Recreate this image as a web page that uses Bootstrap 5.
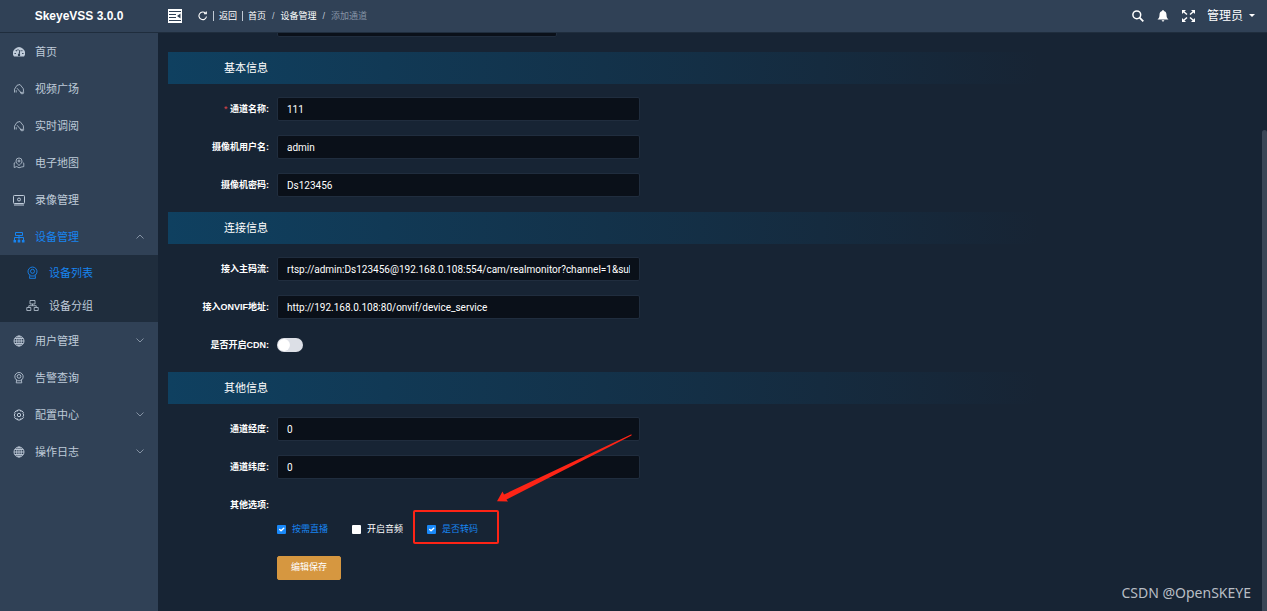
<!DOCTYPE html>
<html lang="zh-CN">
<head>
<meta charset="utf-8">
<meta name="viewport" content="width=device-width, initial-scale=1">
<title>SkeyeVSS 3.0.0</title>
<link href="https://cdn.jsdelivr.net/npm/bootstrap@5.3.0/dist/css/bootstrap.min.css" rel="stylesheet">
<style>
body{background:#172434;color:#fff;font:11px/16px "Liberation Sans","Noto Sans CJK SC",sans-serif;overflow:hidden}
svg{display:block;fill:none;stroke:currentColor;flex:none}
a{color:inherit;text-decoration:none}
.topbar{background:#304156;height:33px;border-bottom:1px solid #1f2d3d}
.brand{width:158px;font-size:12px;font-weight:700}
.crumbs{font-size:9px;margin-left:10px}
.crumbs .breadcrumb{font-size:9px;--bs-breadcrumb-item-padding-x:6px;--bs-breadcrumb-divider-color:#c0c9d4;--bs-breadcrumb-item-active-color:#8794a6}
.split{width:1px;height:10px;background:#c0c9d4;margin:0 5px}
.tool-btn{background:none;border:0;padding:0;color:#fff}
.tools{gap:13px;margin-right:12px}
.user-btn{font-size:12px;margin-left:-1px}
.user-btn::after{margin-left:6px;border-width:3px}
.side{width:158px;background:#304156;color:#bfcbd9}
.side .nav-link{height:37px;padding:0 14px 0 13px;gap:10px;color:inherit;font-size:11px}
.side .sub{background:#1f2d3d;padding-top:1px}
.side .sub .nav-link{height:33px;padding-left:26px}
.side .nav-link.active{color:#1784f0}
.side .chev{margin-left:auto;color:#8492a3}
.content{padding:0 10px}
.peek{margin:-20px 0 15px 109px;width:280px}
.bar{height:32px;margin:15px 0 13px;padding-left:56px;background:linear-gradient(90deg,#0f4060,#172434 80%)}
.bar h2{font-size:11px;line-height:32px;font-weight:400;margin:0}
.line{height:24px;margin-bottom:14px;gap:8px}
.line .cap{width:101px;text-align:right;font-size:9px;font-weight:700}
.req{color:#e0474c;font-weight:400}
.form-control.field,.peek{height:24px;background:#0a1019;border:1px solid #202d3e;border-radius:2px;color:#fff}
.form-control.field{width:363px;padding:0 9px;font:10px/22px Roboto,"Noto Sans CJK SC",sans-serif}
.form-switch .form-check-input.toggle{width:26px;height:14px;margin:0;border:0;background-color:#dcdfe6;--bs-form-switch-bg:url("data:image/svg+xml,%3csvg xmlns='http://www.w3.org/2000/svg' viewBox='-4 -4 8 8'%3e%3ccircle r='3.4' fill='%23fff'/%3e%3c/svg%3e")}
.opts{margin:0 0 15px 109px;gap:24px;font-size:9px;height:24px}
.opt{gap:6px}
.opt .form-check-input{width:9px;height:9px;margin:0;border:0;border-radius:1px;background-color:#fff}
.opt .form-check-input:checked{background-color:#1989fa}
.opt .form-check-input:checked + label{color:#1784f0}
.save{margin-left:109px;width:64px;height:24px;padding:0;font-size:9px;--bs-btn-border-radius:2px;--bs-btn-bg:#d69740;--bs-btn-border-color:#d69740;--bs-btn-color:#fff}
.frame{position:absolute;left:-14px;top:-11px;width:86px;height:34px;border:2px solid #fd2416;border-radius:2px}
.pointer{position:absolute;left:69px;top:-88px;fill:#fd2416;stroke:none}
.thumb{position:absolute;right:0;top:97px;bottom:0;width:5px;border-radius:3px 3px 0 0;background:#3a4656}
.mark-text{position:absolute;right:16px;bottom:8px;font:14px/20px "Noto Sans",sans-serif;color:#b9bec4}
</style>
</head>
<body>
<div class="d-flex flex-column vh-100">
<header class="topbar d-flex align-items-center flex-shrink-0">
  <a href="#" class="brand text-center">SkeyeVSS 3.0.0</a>
  <div class="crumbs d-flex align-items-center">
    <button class="tool-btn me-3" type="button" aria-label="收起菜单"><svg width="14" height="14" viewBox="0 0 14 14"><path d="M0 0h14v14H0z" fill="#fff" stroke="none"/><path d="M1 2.500h12M1 5.500h7M1 8.500h7M1 11.500h12" stroke="#304156" stroke-width="1"/><path d="M12.500 4.500v5L9 7z" fill="#304156" stroke="none"/></svg></button>
    <button class="tool-btn" type="button" aria-label="刷新"><svg width="10" height="10" viewBox="0 0 10 10"><path d="M7.500 2.200A3.800 3.800 0 1 0 8.500 5.500M8.300.5v2.300H6" stroke-width="1.100"/></svg></button>
    <span class="split"></span><a href="#">返回</a><span class="split"></span>
    <ol class="breadcrumb mb-0"><li class="breadcrumb-item"><a href="#">首页</a></li><li class="breadcrumb-item"><a href="#">设备管理</a></li><li class="breadcrumb-item active">添加通道</li></ol>
  </div>
  <div class="tools d-flex align-items-center ms-auto">
    <button class="tool-btn" type="button" aria-label="搜索"><svg width="12" height="12" viewBox="0 0 12 12" stroke-width="1.500"><circle cx="4.800" cy="4.800" r="3.900"/><path d="M7.600 7.600l3.700 3.700" stroke-width="1.800"/></svg></button>
    <button class="tool-btn" type="button" aria-label="消息"><svg width="12" height="12" viewBox="0 0 12 12"><path d="M6 0c.6 0 .8.400.8 1C8.700 1.400 9.500 2.800 9.500 4.800c0 2.500.5 3.500 2 4.700H.5C2 8.300 2.500 7.300 2.500 4.800c0-2 .8-3.400 2.700-3.800 0-.6.2-1 .8-1zM4.700 10.300h2.600a1.300 1.300 0 0 1-2.600 0z" fill="currentColor" stroke="none"/></svg></button>
    <button class="tool-btn" type="button" aria-label="全屏"><svg width="13" height="12" viewBox="0 0 13 12" stroke-width="1.500"><path d="M1.500 1.500l3.500 3M11.500 1.500L8 4.500M1.500 10.500l3.500-3M11.500 10.500L8 7.500"/><path d="M0 0h4L0 4zM13 0H9l4 4zM0 12h4L0 8zM13 12H9l4-4z" stroke="none" fill="currentColor"/></svg></button>
    <button class="tool-btn user-btn dropdown-toggle" type="button" data-bs-toggle="dropdown">管理员</button>
  </div>
</header>
<div class="d-flex flex-grow-1 position-relative overflow-hidden">
  <nav class="side nav flex-column flex-nowrap flex-shrink-0">
    <a href="#" class="nav-link d-flex align-items-center"><svg width="12" height="12" viewBox="0 0 12 12"><path d="M1 10.500A6 6 0 1 1 11 10.500z" fill="currentColor" stroke="none"/><path d="M6 9l.9-5M1.500 7.500h1.400M9.100 7.500h1.400M2.800 4.200l1 .9M5 3.200V4.500M9.300 4.300l-.8.9" stroke="#304156" stroke-width="1.100"/><circle cx="6" cy="9" r="1.200" fill="#304156" stroke="none"/></svg>首页</a>
    <a href="#" class="nav-link d-flex align-items-center"><svg width="12" height="12" viewBox="0 0 12 12" stroke-width=".8"><path d="M1.500 9.500V6.200L4 2.300l3-.8 3.300 4.200.3 3-1.600.9-1.700-.6L4 5.200M3.200 9.500V7.200M7.300 9l.8 1.700h2.100l.6-1.600"/></svg>视频广场</a>
    <a href="#" class="nav-link d-flex align-items-center"><svg width="12" height="12" viewBox="0 0 12 12" stroke-width=".8"><path d="M1.500 9.500V6.200L4 2.300l3-.8 3.300 4.200.3 3-1.600.9-1.700-.6L4 5.200M3.200 9.500V7.200M7.300 9l.8 1.700h2.100l.6-1.600"/></svg>实时调阅</a>
    <a href="#" class="nav-link d-flex align-items-center"><svg width="12" height="12" viewBox="0 0 12 12" stroke-width=".8"><path d="M6 8.500C4 6.800 3 5.500 3 4a3 3 0 0 1 6 0c0 1.500-1 2.800-3 4.500z"/><circle cx="6" cy="4" r="1"/><path d="M2.300 5.500L1.200 6v4.500l2.500-.9 2.300 1.200 2.500-.8 2.300-.4V6.300L9.800 5.500"/></svg>电子地图</a>
    <a href="#" class="nav-link d-flex align-items-center"><svg width="12" height="12" viewBox="0 0 12 12"><rect x=".5" y="1.500" width="11" height="8" rx=".8"/><circle cx="6" cy="5.500" r="1.500"/><path d="M1 11h10"/></svg>录像管理</a>
    <a href="#" class="nav-link active d-flex align-items-center"><svg width="12" height="12" viewBox="0 0 12 12"><path d="M2.500 1.500h7v3h-7zM6 5v2M1.500 9V6.500h9V9M6 7v3"/><path d="M.5 9h2.600v2.500H.5zM4.700 9h2.600v2.500H4.700zM8.900 9h2.600v2.500H8.900z" fill="currentColor" stroke="none"/></svg>设备管理<svg class="chev" width="8" height="5" viewBox="0 0 8 5"><path d="M.5 4.500L4 1l3.500 3.500"/></svg></a>
    <div class="sub">
      <a href="#" class="nav-link active d-flex align-items-center"><svg width="13" height="13" viewBox="0 0 13 13" stroke-width=".9"><path d="M4 9.300a4.500 4.500 0 1 1 5 0M4 8.500L3.500 12.300h6L9 8.500M4.500 10h4"/><circle cx="6.500" cy="5.300" r="2"/></svg>设备列表</a>
      <a href="#" class="nav-link d-flex align-items-center"><svg width="13" height="13" viewBox="0 0 13 13" stroke-width=".8"><path d="M4 1.500h5v3.500H4zM.8 8.500h4v3h-4zM8.200 8.500h4v3h-4zM6.500 5v1.700M2.800 8.500V6.700h7.400v1.800"/></svg>设备分组</a>
    </div>
    <a href="#" class="nav-link d-flex align-items-center"><svg width="12" height="12" viewBox="0 0 12 12" stroke-width=".9"><circle cx="6" cy="6" r="5"/><ellipse cx="6" cy="6" rx="2.300" ry="5"/><path d="M1 6h10M6 1v10M1.800 3.500h8.400M1.800 8.500h8.400"/></svg>用户管理<svg class="chev" width="8" height="5" viewBox="0 0 8 5"><path d="M.5.5L4 4 7.500.5"/></svg></a>
    <a href="#" class="nav-link d-flex align-items-center"><svg width="12" height="13" viewBox="0 0 13 13" stroke-width=".9"><path d="M4 9.300a4.500 4.500 0 1 1 5 0M4 8.500L3.500 12.300h6L9 8.500M4.500 10h4"/><circle cx="6.500" cy="5.300" r="2"/></svg>告警查询</a>
    <a href="#" class="nav-link d-flex align-items-center"><svg width="12" height="12" viewBox="0 0 12 12"><path d="M4.700 1h2.600l.4 1.300L9 1.800l1.500 2-.6 1 1.100 1.200-1.100 1.200.6 1.200-1.500 1.800-1.300-.5L7.300 11H4.700l-.4-1.300-1.300.5-1.500-1.800.6-1.200L1 6l1.100-1.200-.6-1 1.500-2 1.300.5z"/><circle cx="6" cy="6" r="1.700"/></svg>配置中心<svg class="chev" width="8" height="5" viewBox="0 0 8 5"><path d="M.5.5L4 4 7.500.5"/></svg></a>
    <a href="#" class="nav-link d-flex align-items-center"><svg width="12" height="12" viewBox="0 0 12 12" stroke-width=".9"><circle cx="6" cy="6" r="5"/><ellipse cx="6" cy="6" rx="2.300" ry="5"/><path d="M1 6h10M6 1v10M1.800 3.500h8.400M1.800 8.500h8.400"/></svg>操作日志<svg class="chev" width="8" height="5" viewBox="0 0 8 5"><path d="M.5.5L4 4 7.500.5"/></svg></a>
  </nav>
  <main class="content flex-grow-1">
    <form>
      <div class="peek"></div>
      <div class="bar"><h2>基本信息</h2></div>
      <div class="line d-flex align-items-center"><label class="cap" for="name"><span class="req">*</span> 通道名称:</label><input class="form-control field" id="name" value="111"></div>
      <div class="line d-flex align-items-center"><label class="cap" for="user">摄像机用户名:</label><input class="form-control field" id="user" value="admin"></div>
      <div class="line d-flex align-items-center"><label class="cap" for="pass">摄像机密码:</label><input class="form-control field" id="pass" value="Ds123456"></div>
      <div class="bar"><h2>连接信息</h2></div>
      <div class="line d-flex align-items-center"><label class="cap" for="stream">接入主码流:</label><input class="form-control field" id="stream" value="rtsp://admin:Ds123456@192.168.0.108:554/cam/realmonitor?channel=1&amp;subtype=0"></div>
      <div class="line d-flex align-items-center"><label class="cap" for="onvif">接入ONVIF地址:</label><input class="form-control field" id="onvif" value="http://192.168.0.108:80/onvif/device_service"></div>
      <div class="line d-flex align-items-center"><label class="cap" for="cdn">是否开启CDN:</label><div class="form-switch d-flex p-0"><input class="form-check-input toggle" type="checkbox" role="switch" id="cdn"></div></div>
      <div class="bar"><h2>其他信息</h2></div>
      <div class="line d-flex align-items-center"><label class="cap" for="lng">通道经度:</label><input class="form-control field" id="lng" value="0"></div>
      <div class="line d-flex align-items-center"><label class="cap" for="lat">通道纬度:</label><input class="form-control field" id="lat" value="0"></div>
      <div class="line d-flex align-items-center mb-0"><span class="cap">其他选项:</span></div>
      <div class="opts d-flex align-items-center">
        <div class="opt d-flex align-items-center"><input class="form-check-input" type="checkbox" id="o1" checked><label for="o1">按需直播</label></div>
        <div class="opt d-flex align-items-center"><input class="form-check-input" type="checkbox" id="o2"><label for="o2">开启音频</label></div>
        <div class="opt d-flex align-items-center position-relative"><input class="form-check-input" type="checkbox" id="o3" checked><label for="o3">是否转码</label>
          <span class="frame"></span>
          <svg class="pointer" width="136" height="70" viewBox="0 0 136 70"><path d="M135.500 1.300L8 61.500 6.500 58.500 1 68.300 12 68.500 10.500 66.500 135.500 2.400z"/></svg>
        </div>
      </div>
      <button class="btn save" type="button">编辑保存</button>
    </form>
  </main>
  <div class="thumb"></div>
  <div class="mark-text">CSDN @OpenSKEYE</div>
</div>
</div>
<script src="https://cdn.jsdelivr.net/npm/bootstrap@5.3.0/dist/js/bootstrap.bundle.min.js"></script>
</body>
</html>
